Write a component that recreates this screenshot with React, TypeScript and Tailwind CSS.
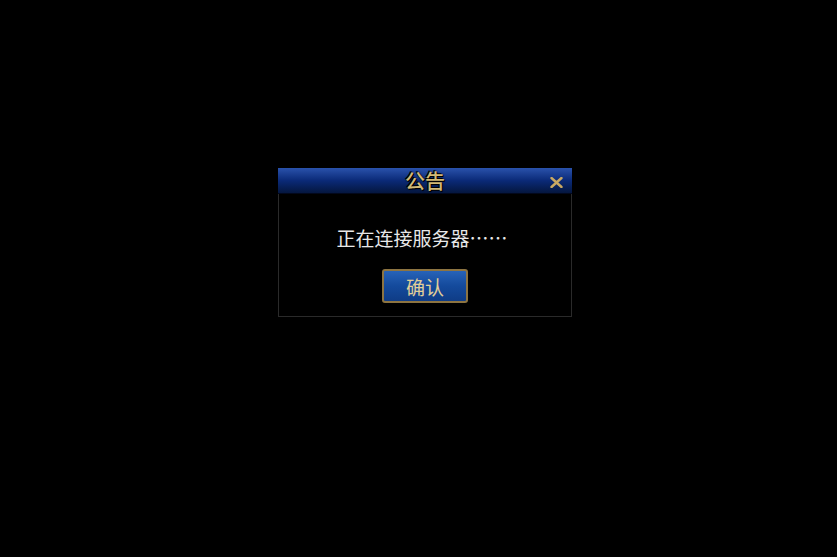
export default function App() {
  const cjk = { fontFamily: '"Noto Sans CJK SC", "Liberation Sans", sans-serif' }
  return (
    <div className="w-[837px] h-[557px] bg-black relative" style={cjk}>
      {/* Notice dialog */}
      <div className="absolute left-[278px] top-[168px] w-[294px] flex flex-col">
        <div className="h-[26px] relative flex items-center justify-center bg-gradient-to-b from-[#2a52ac] via-[#0b2a78] to-[#05173f] border-b border-[#02081c]">
          <span
            className="text-[20px] leading-none text-[#d2ba77] font-medium"
            style={{ textShadow: '0 0 2px #000, 1px 1px 0 #000, -1px -1px 0 #000' }}
          >
            公告
          </span>
          <svg className="absolute right-[9px] top-[9px] w-[13px] h-[11px]" viewBox="0 0 13 11">
            <path d="M1.5 1 L11.5 10 M11.5 1 L1.5 10" stroke="#c9a862" strokeWidth="2.4" strokeLinecap="round" />
          </svg>
        </div>
        <div className="h-[123px] bg-black border-x border-b border-[#2a2a2a] flex flex-col items-center pt-[34px]">
          <div className="text-[19px] leading-none text-[#e8e8e8] mr-[6px]">正在连接服务器……</div>
          <button className="mt-[22px] w-[86px] h-[34px] rounded-[3px] border-2 border-[#8d7441] bg-gradient-to-b from-[#2763b8] via-[#144a9c] to-[#0f3c86] text-[19px] leading-none text-[#e2cf98]">
            确认
          </button>
        </div>
      </div>
    </div>
  )
}
